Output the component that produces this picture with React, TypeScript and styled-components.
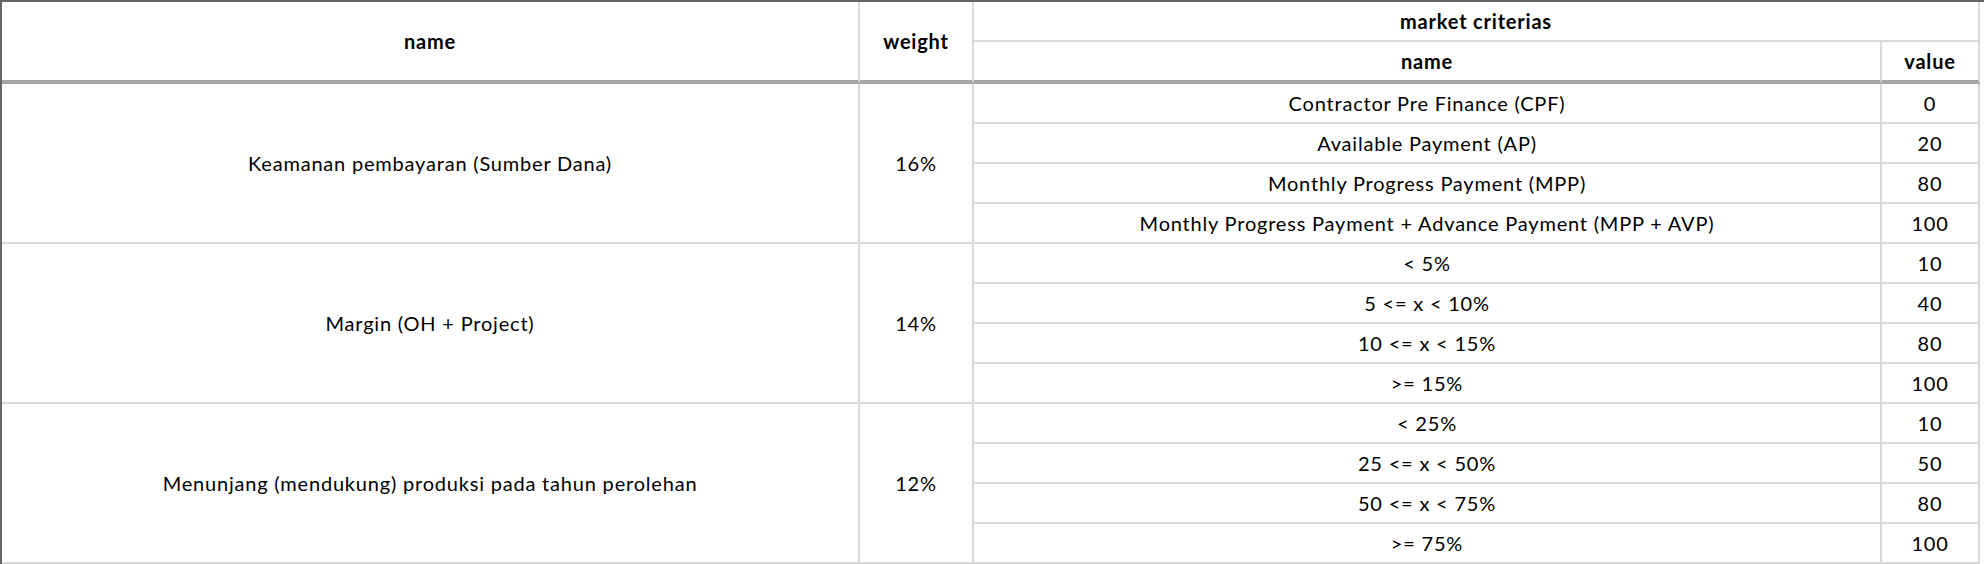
import styled, { createGlobalStyle } from "styled-components"

const GlobalStyle = createGlobalStyle`
    html, body {
        margin: 0;
        padding: 0;
        background: #fff;
    }
    body {
        font-family: Lato, "Liberation Sans", sans-serif;
        color: #000;
    }
`

const Frame = styled.div`
    width: 1984px;
    height: 564px;
    box-sizing: border-box;
    border-top: 2px solid #666;
    border-left: 2px solid #666;
    overflow: hidden;
`

const Grid = styled.table`
    width: 1978px;
    table-layout: fixed;
    border-collapse: separate;
    border-spacing: 0;
    font-size: 20px;
    letter-spacing: 0.8px;
`

const Cell = styled.td<{ $heavy?: boolean; $head?: boolean; $h?: number }>`
    box-sizing: border-box;
    height: ${p => p.$h ?? 40}px;
    padding: 0 4px;
    text-align: center;
    vertical-align: middle;
    white-space: nowrap;
    font-weight: ${p => (p.$head ? 700 : 400)};
    border-right: 2px solid #d9d9d9;
    border-bottom: ${p => (p.$heavy ? "4px solid #a6a6a6" : "2px solid #d9d9d9")};
`

type Group = {
    name: string
    weight: string
    criteria: [string, number][]
}

const groups: Group[] = [
    {
        name: "Keamanan pembayaran (Sumber Dana)",
        weight: "16%",
        criteria: [
            ["Contractor Pre Finance (CPF)", 0],
            ["Available Payment (AP)", 20],
            ["Monthly Progress Payment (MPP)", 80],
            ["Monthly Progress Payment + Advance Payment (MPP + AVP)", 100],
        ],
    },
    {
        name: "Margin (OH + Project)",
        weight: "14%",
        criteria: [
            ["< 5%", 10],
            ["5 <= x < 10%", 40],
            ["10 <= x < 15%", 80],
            [">= 15%", 100],
        ],
    },
    {
        name: "Menunjang (mendukung) produksi pada tahun perolehan",
        weight: "12%",
        criteria: [
            ["< 25%", 10],
            ["25 <= x < 50%", 50],
            ["50 <= x < 75%", 80],
            [">= 75%", 100],
        ],
    },
]

const App = () => {
    return (
        <>
            <GlobalStyle />
            <Frame>
                <Grid>
                    <colgroup>
                        <col style={{ width: 858 }} />
                        <col style={{ width: 114 }} />
                        <col style={{ width: 908 }} />
                        <col style={{ width: 98 }} />
                    </colgroup>
                    <thead>
                        <tr>
                            <Cell as="th" $head $heavy rowSpan={2}>name</Cell>
                            <Cell as="th" $head $heavy rowSpan={2}>weight</Cell>
                            <Cell as="th" $head colSpan={2}>market criterias</Cell>
                        </tr>
                        <tr>
                            <Cell as="th" $head $heavy $h={42}>name</Cell>
                            <Cell as="th" $head $heavy $h={42}>value</Cell>
                        </tr>
                    </thead>
                    <tbody>
                        {groups.map(g =>
                            g.criteria.map(([label, value], i) => (
                                <tr key={g.name + i}>
                                    {i === 0 && <Cell rowSpan={4}>{g.name}</Cell>}
                                    {i === 0 && <Cell rowSpan={4}>{g.weight}</Cell>}
                                    <Cell>{label}</Cell>
                                    <Cell>{value}</Cell>
                                </tr>
                            ))
                        )}
                    </tbody>
                </Grid>
            </Frame>
        </>
    )
}

export default App
